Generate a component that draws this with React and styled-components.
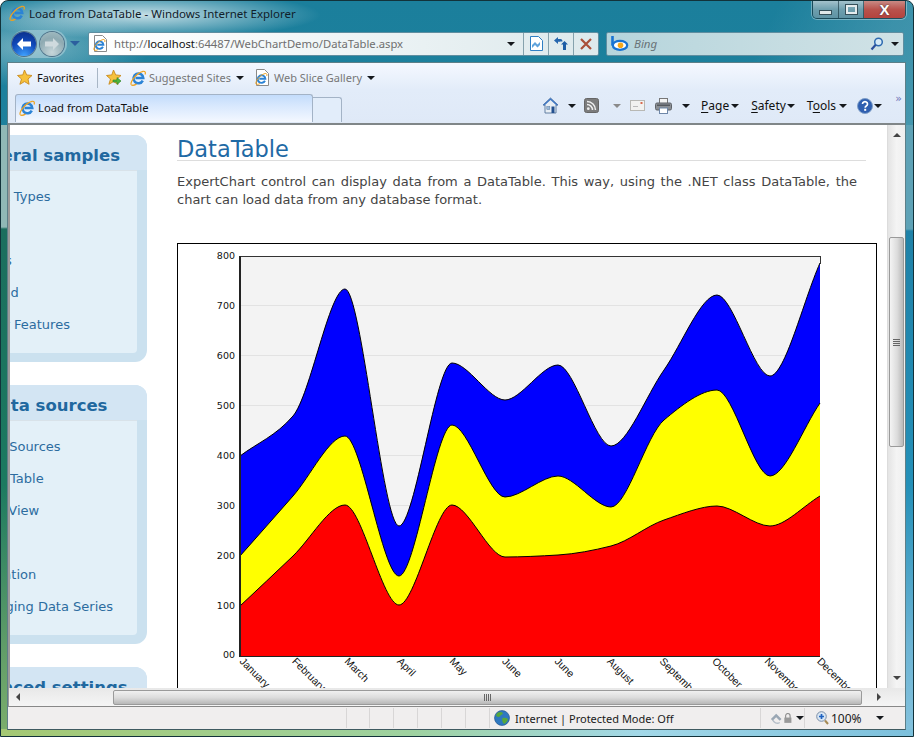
import styled, { createGlobalStyle } from "styled-components";

const GlobalStyle = createGlobalStyle`
  html, body { margin: 0; padding: 0; background: #fff; }
  body { width: 914px; height: 737px; overflow: hidden; font-family: "Noto Sans", "Liberation Sans", sans-serif; }
`;

const UI_FONT = `"Noto Sans", "Liberation Sans", sans-serif`;
const PAGE_FONT = `"DejaVu Sans", Verdana, sans-serif`;

/* ---------- icons ---------- */

function IeMark() {
  return (
    <>
      <path d="M12.800 10.600A4.900 4.900 0 1 1 13.300 8H5.500" fill="none" stroke="#2b83d6" strokeWidth="2.500" />
      <path d="M1.300 14.700C-.2 12.500 6 3 13 1.300c2-.4 2.800 1 2.100 3.200" fill="none" stroke="#eea21f" strokeWidth="1.200" />
      <path d="M1.300 14.700c1.100 1 3.200.5 5.200-.6" fill="none" stroke="#eea21f" strokeWidth="1.200" />
    </>
  );
}

function IeIcon() {
  return (
    <svg width="16" height="16" viewBox="0 0 16 16" style={{ flex: "none" }}>
      <IeMark />
    </svg>
  );
}

function PageIeIcon() {
  return (
    <svg width="16" height="17" viewBox="0 0 16 17" style={{ flex: "none" }}>
      <path d="M2.500.5h8l4 4v12h-12z" fill="#fff" stroke="#8a8a8a" />
      <g transform="translate(1 3.500) scale(.78)">
        <IeMark />
      </g>
    </svg>
  );
}

function Star({ add }) {
  return (
    <svg width="17" height="17" viewBox="0 0 17 17" style={{ flex: "none" }}>
      <path d="M8.500 1l2.200 4.900 5.300.6-4 3.500 1.100 5.300-4.600-2.700-4.600 2.700L5.500 10l-4-3.500 5.300-.6z" fill="#f6c13c" stroke="#c98a1c" strokeWidth=".9" />
      {add && <path d="M8 11h4V8.500l4 3.500-4 3.500V13H8z" fill="#4fb53c" stroke="#2c7f24" strokeWidth=".6" />}
    </svg>
  );
}

function NavArrow({ dir = 1, color = "#fff" }) {
  return (
    <svg width="16" height="14" viewBox="0 0 16 14" style={dir > 0 ? { transform: "scaleX(-1)" } : undefined}>
      <path d="M1 7l6-6v3.500h8v5H7V13z" fill={color} />
    </svg>
  );
}

function Globe() {
  return (
    <svg width="16" height="16" viewBox="0 0 16 16" style={{ flex: "none" }}>
      <circle cx="8" cy="8" r="7.500" fill="#2e78c0" stroke="#1d4f84" strokeWidth=".6" />
      <path d="M4 2.500c2-1 4-.5 5 .8-.5 2-3 1.500-3.500 3.500-1.500.5-3-.2-3.500-1.300.3-1.200 1-2.200 2-3zM8.500 8c2-.5 4 0 5.500 1-.5 2.500-2 4-4 5-1.500-1.500-2.500-4-1.500-6z" fill="#56a83c" />
    </svg>
  );
}

function HomeIcon() {
  return (
    <svg width="17" height="17" viewBox="0 0 17 17">
      <path d="M8.500 1L1 8h2v8h11V8h2z" fill="#e8eef4" stroke="#55749a" strokeWidth=".9" />
      <path d="M8.500 1L1 8l1.500.5 6-5.500 6 5.500L16 8z" fill="#3f77c4" />
      <rect x="9.500" y="9.500" width="3" height="6.500" fill="#23508f" />
      <rect x="4.800" y="9.500" width="3" height="3" fill="#9ab8d8" stroke="#5d7ea6" strokeWidth=".5" />
    </svg>
  );
}

function FeedIcon() {
  return (
    <svg width="15" height="15" viewBox="0 0 15 15">
      <rect x=".5" y=".5" width="14" height="14" rx="2" fill="#7c7c7c" stroke="#666" />
      <circle cx="4.300" cy="10.700" r="1.400" fill="#eee" />
      <path d="M3 6.500a5.500 5.500 0 0 1 5.500 5.500M3 3.500A8.500 8.500 0 0 1 11.500 12" fill="none" stroke="#eee" strokeWidth="1.500" />
    </svg>
  );
}

function MailIcon() {
  return (
    <svg width="15" height="11" viewBox="0 0 15 11">
      <rect x=".5" y=".5" width="14" height="10" fill="#f2f2f0" stroke="#b8b8b4" />
      <rect x="3" y="6" width="5" height="1" fill="#bbb" />
      <rect x="10.500" y="2" width="2" height="2" fill="#d86a50" />
    </svg>
  );
}

function PrinterIcon() {
  return (
    <svg width="17" height="16" viewBox="0 0 17 16">
      <rect x="4.500" y=".5" width="8" height="5" fill="#f4f4f4" stroke="#777" />
      <rect x=".5" y="5" width="16" height="7" rx="1.500" fill="#8b8f94" stroke="#5e6268" />
      <rect x="2" y="6.500" width="13" height="1.500" fill="#55595e" />
      <rect x="4.500" y="10" width="8" height="5.500" fill="#fff" stroke="#6f87a8" />
    </svg>
  );
}

function HelpIcon() {
  return (
    <svg width="16" height="16" viewBox="0 0 16 16">
      <circle cx="8" cy="8" r="7.500" fill="#2f5fb0" stroke="#7f9fc8" />
      <path d="M5.500 6a2.500 2.300 0 1 1 3.800 2c-.8.500-1.100.9-1.100 1.700" fill="none" stroke="#fff" strokeWidth="1.700" />
      <rect x="7.200" y="10.800" width="2" height="2" fill="#fff" />
    </svg>
  );
}

function BingLogo() {
  return (
    <svg width="18" height="15" viewBox="0 0 18 15" style={{ flex: "none" }}>
      <path d="M1.500 0v9.500" stroke="#1873d3" strokeWidth="2.600" fill="none" />
      <ellipse cx="9" cy="9.300" rx="7.200" ry="4.500" fill="#fff" stroke="#1873d3" strokeWidth="2.300" />
      <circle cx="9.500" cy="9.300" r="2.800" fill="#f5a81c" />
    </svg>
  );
}

function Magnifier() {
  return (
    <svg width="14" height="14" viewBox="0 0 14 14">
      <circle cx="8.500" cy="5" r="3.800" fill="#d6eaf6" stroke="#2d6ab0" strokeWidth="1.500" />
      <path d="M5.700 7.800L1.500 12.500" stroke="#2a4f9c" strokeWidth="2.200" />
    </svg>
  );
}

function CompatIcon() {
  return (
    <svg width="15" height="15" viewBox="0 0 15 15">
      <path d="M1 8l6-6 6 6-2 2-4-4-4 4z" fill="#9aa7b4" />
      <path d="M3 9c1 3 5 5 8 3" fill="none" stroke="#b4bec8" strokeWidth="1.500" />
    </svg>
  );
}

function RefreshIcon() {
  return (
    <svg width="16" height="15" viewBox="0 0 16 15">
      <path d="M1 4.500L5 1v2h2.500C8.800 3 9.500 4 9.500 5.500H8C8 5 7.600 5.800 7 5.800H5V8z" fill="#2566ad" />
      <path d="M15 8.500L11.500 5 8 8.500h2V14h3V8.500z" fill="#1f5ea6" />
    </svg>
  );
}

function StopIcon() {
  return (
    <svg width="12" height="12" viewBox="0 0 12 12">
      <path d="M1 1l10 10M11 1L1 11" stroke="#a9503a" strokeWidth="2.200" />
    </svg>
  );
}

function CompatPageIcon() {
  return (
    <svg width="13" height="15" viewBox="0 0 13 15">
      <path d="M.5.500h8l4 4v10H.5z" fill="#fff" stroke="#2f7fc4" />
      <path d="M2 9l3-3 2.500 2.500L10 6v3L7.500 11.500 5 9l-3 3z" fill="#5fa3dc" />
    </svg>
  );
}

function LockIcon() {
  return (
    <svg width="11" height="12" viewBox="0 0 11 12">
      <path d="M3 6V3.500a2.500 2.500 0 0 1 5 0V6" fill="none" stroke="#888" strokeWidth="1.200" />
      <rect x="1.500" y="5.500" width="8" height="6" fill="#999" />
    </svg>
  );
}

function ZoomIcon() {
  return (
    <svg width="13" height="14" viewBox="0 0 13 14">
      <circle cx="5.500" cy="5.500" r="4.800" fill="#d8e6f4" stroke="#7b8ea6" />
      <path d="M3 5.500h5M5.500 3v5" stroke="#1f62c0" strokeWidth="1.700" />
      <path d="M9 9.500l3 3.500" stroke="#a58a54" strokeWidth="2" />
    </svg>
  );
}

/* ---------- window frame ---------- */

const Window = styled.div`
  position: relative;
  width: 914px;
  height: 737px;
  box-sizing: border-box;
  display: flex;
  flex-direction: column;
  border: 1px solid #12323a;
  border-radius: 8px 8px 0 0;
  overflow: hidden;
  background:
    linear-gradient(90deg, #a4c873 0%, #9ed2a0 45%, #a2d8e8 70%, #7cc0dc 100%) left bottom / 100% 7px no-repeat,
    linear-gradient(180deg, #90b8b6 0, #90b8b6 102px, #1c6e5e 104px, #1c7a60 360px, #5f9c68 520px, #a4c873 100%) left 124px / 8px 100% no-repeat,
    linear-gradient(180deg, #5ea2b6 0, #5ea2b6 104px, #1f82a8 106px, #2490b8 360px, #6cb4d4 520px, #a6d6ea 100%) right 124px / 8px 100% no-repeat,
    radial-gradient(ellipse 180px 24px at 140px 14px, rgba(255, 255, 255, 0.75), rgba(255, 255, 255, 0) 100%),
    radial-gradient(ellipse 120px 40px at 30px 46px, rgba(220, 235, 235, 0.45), rgba(255, 255, 255, 0) 100%),
    linear-gradient(115deg, rgba(255, 255, 255, 0) 62%, rgba(255, 255, 255, 0.14) 72%, rgba(255, 255, 255, 0.32) 100%),
    linear-gradient(180deg, #1b7f9c 0%, #2b8aa3 100%);
`;

const TitleBar = styled.div`
  height: 27px;
  flex: none;
  display: flex;
  align-items: flex-start;
`;

const TitleIcon = styled.div`
  margin: 4px 0 0 8px;
  display: flex;
`;

const TitleText = styled.div`
  margin: 4px 0 0 4px;
  font-family: ${UI_FONT};
  font-size: 11.5px;
  line-height: 17px;
  color: #10202a;
`;

const WindowControls = styled.div`
  margin-left: auto;
  display: flex;
  width: 92px;
  height: 17px;
  border: 1px solid rgba(20, 50, 60, 0.7);
  border-top: none;
  border-radius: 0 0 5px 5px;
  box-shadow: 0 0 0 1px rgba(255, 255, 255, 0.35);
  overflow: hidden;
  margin-right: 7px;
`;

const ControlButton = styled.div`
  width: ${(p) => p.$w}px;
  flex: none;
  box-sizing: border-box;
  display: flex;
  align-items: center;
  justify-content: center;
  border-right: ${(p) => (p.$last ? "none" : "1px solid rgba(20, 50, 60, 0.6)")};
  background: ${(p) =>
    p.$close
      ? "linear-gradient(180deg, #c98a84 0, #b9524c 50%, #b5443e 100%)"
      : "linear-gradient(180deg, #a3c2cc 0, #6e9fae 50%, #5e93a4 100%)"};
`;

const MinGlyph = styled.div`
  width: 11px;
  height: 3px;
  margin-top: 5px;
  background: #dfe8ea;
  border: 1px solid #35505a;
`;

const MaxGlyph = styled.div`
  width: 7px;
  height: 5px;
  background: transparent;
  border: 2px solid #e4ecee;
  outline: 1px solid #35505a;
`;

const CloseGlyph = styled.div`
  font-family: "Liberation Sans", sans-serif;
  font-weight: 700;
  font-size: 15px;
  line-height: 15px;
  color: #fff;
  text-shadow: 0 0 2px #333;
`;

const NavBar = styled.div`
  height: 34px;
  flex: none;
  display: flex;
  align-items: center;
  padding-bottom: 3px;
  box-sizing: border-box;
`;

const NavPill = styled.div`
  margin-left: 10px;
  width: 56px;
  height: 28px;
  flex: none;
  display: flex;
  align-items: center;
  gap: 4px;
  padding: 0 1px;
  box-sizing: border-box;
  border-radius: 14px;
  background: rgba(200, 225, 230, 0.45);
`;

const NavButton = styled.div`
  width: 24px;
  height: 24px;
  flex: none;
  border-radius: 50%;
  display: flex;
  align-items: center;
  justify-content: center;
  box-shadow: 0 0 0 1px rgba(30, 50, 80, 0.55);
  background: ${(p) =>
    p.$off
      ? "radial-gradient(circle at 50% 85%, #c7d6da, #8eaab2 60%, #a7bfc5)"
      : "radial-gradient(circle at 50% 100%, #3fa2ff 0, #1048b8 55%, #0a2a80 100%)"};
`;

const HistoryArrow = styled.div`
  width: 0;
  height: 0;
  margin-left: 3px;
  border-left: 5px solid transparent;
  border-right: 5px solid transparent;
  border-top: 5px solid #2c5f9e;
`;

const AddressBox = styled.div`
  margin-left: 8px;
  width: 511px;
  height: 24px;
  flex: none;
  box-sizing: border-box;
  display: flex;
  align-items: center;
  border: 1px solid #5f8ea0;
  border-radius: 2px;
  background: linear-gradient(90deg, #fff 0, #f2f7f8 40%, #dde9ec 100%);
`;

const AddressIcon = styled.div`
  margin-left: 3px;
  display: flex;
`;

const UrlText = styled.div`
  margin-left: 6px;
  flex: 1;
  font-family: ${UI_FONT};
  font-size: 11.25px;
  white-space: nowrap;
  color: #6f6f6f;

  b {
    font-weight: 400;
    color: #111;
  }
`;

const AddressButton = styled.div`
  width: 25px;
  height: 22px;
  flex: none;
  box-sizing: border-box;
  display: flex;
  align-items: center;
  justify-content: center;
  border-left: ${(p) => (p.$plain ? "none" : "1px solid #86a2ad")};
`;

const SearchBox = styled.div`
  margin-left: 7px;
  width: 298px;
  height: 24px;
  flex: none;
  box-sizing: border-box;
  display: flex;
  align-items: center;
  padding: 0 4px;
  border: 1px solid #5f8ea0;
  border-radius: 2px;
  background: linear-gradient(90deg, #b6d5dc 0, #c6dde2 60%, #d0e2e6 100%);
`;

const SearchHint = styled.div`
  margin-left: 5px;
  flex: 1;
  font-family: ${UI_FONT};
  font-size: 11.5px;
  font-style: italic;
  color: #6a7478;
`;

const Caret = styled.div`
  width: 0;
  height: 0;
  flex: none;
  margin-left: ${(p) => p.$ml ?? 4}px;
  border-left: 4px solid transparent;
  border-right: 4px solid transparent;
  border-top: 4px solid ${(p) => p.$color ?? "#15181c"};
`;

/* ---------- browser body ---------- */

const Chrome = styled.div`
  flex: 1;
  min-height: 0;
  margin: 0 7px 6px 6px;
  display: flex;
  flex-direction: column;
  box-sizing: border-box;
  background: #fff;
  border: 1px solid #5d7f88;
  border-bottom: 1px solid #3f5a60;
`;

const CommandPanel = styled.div`
  height: 62px;
  flex: none;
  box-sizing: border-box;
  display: flex;
  flex-direction: column;
  background: linear-gradient(180deg, #f5f8ff 0, #e2ecf9 45%, #dfe9f7 100%);
  border-bottom: 2px solid #808688;
`;

const FavRow = styled.div`
  height: 31px;
  flex: none;
  display: flex;
  align-items: center;
  padding: 0 0 2px 8px;
  box-sizing: border-box;
  font-family: ${UI_FONT};
  font-size: 11px;
`;

const FavLabel = styled.span`
  margin-left: ${(p) => p.$ml ?? 4}px;
  color: ${(p) => (p.$muted ? "#777" : "#111")};
`;

const FavIcon = styled.div`
  margin-left: ${(p) => p.$ml}px;
  display: flex;
`;

const FavDivider = styled.div`
  width: 1px;
  height: 20px;
  margin: 0 7px 0 13px;
  background: #a8b6c6;
`;

const TabRow = styled.div`
  height: 29px;
  flex: none;
  display: flex;
  align-items: flex-start;
  padding-left: 7px;
  font-family: ${UI_FONT};
  font-size: 11.3px;
`;

const ActiveTab = styled.div`
  width: 298px;
  height: 28px;
  box-sizing: border-box;
  display: flex;
  align-items: center;
  gap: 3px;
  padding: 0 0 2px 3px;
  border: 1px solid #a3b3c6;
  border-bottom: none;
  border-radius: 3px 3px 0 0;
  background: linear-gradient(180deg, #c3dcfb 0, #d8e8fd 40%, #f4f8ff 100%);
  color: #111;
`;

const NewTab = styled.div`
  width: 29px;
  height: 25px;
  margin-top: 3px;
  box-sizing: border-box;
  border: 1px solid #a3b3c6;
  border-bottom: none;
  border-left: none;
  border-radius: 0 3px 0 0;
  background: #e2edfa;
`;

const Tools = styled.div`
  flex: 1;
  height: 29px;
  display: flex;
  align-items: center;
  padding: 0 0 6px 200px;
  box-sizing: border-box;
  font-size: 12px;
  color: #111;
`;

const ToolIcon = styled.div`
  margin-left: ${(p) => p.$ml ?? 0}px;
  display: flex;
`;

const ToolLabel = styled.span`
  margin-left: ${(p) => p.$ml}px;

  u {
    text-underline-offset: 2px;
  }
`;

const Chevrons = styled.div`
  position: absolute;
  top: 92px;
  right: 11px;
  font-family: "DejaVu Sans", sans-serif;
  font-size: 11px;
  line-height: 12px;
  color: #6f73b8;
`;

const Middle = styled.div`
  flex: 1;
  min-height: 0;
  display: flex;
  border-left: 2px solid #9a9a9a;
`;

const Viewport = styled.div`
  flex: 1;
  min-width: 0;
  display: flex;
  align-items: flex-start;
  padding-top: 10px;
  overflow: hidden;
  background: #fff;
`;

/* ---------- page: sidebar ---------- */

const Sidebar = styled.div`
  width: 228px;
  flex: none;
  margin-left: -91px;
  display: flex;
  flex-direction: column;
  gap: 23px;
  font-family: ${PAGE_FONT};
`;

const Panel = styled.div`
  flex: none;
  border-radius: 12px;
  background: #cbe1ef;
  padding: 0 10px 9px 0;
  position: relative;
`;

const PanelHeader = styled.div`
  height: 35px;
  margin-right: -10px;
  box-sizing: border-box;
  border-radius: 12px 12px 0 0;
  padding: 10px 0 0 ${(p) => p.$pl}px;
  background: #d3e5f3;
  font-size: 16.5px;
  font-weight: 700;
  line-height: 22px;
  white-space: nowrap;
  color: #21689f;
`;

const PanelBody = styled.div`
  border-top: 1px solid #d8e2e9;
  border-radius: 0 0 4px 0;
  padding: 10px 0 12px;
  background: #e3f0f8;
`;

const MenuItem = styled.div`
  height: 32px;
  padding-left: ${(p) => p.$pl}px;
  font-size: 13px;
  line-height: 32px;
  white-space: nowrap;
  color: #2c6c9f;
`;

/* ---------- page: content ---------- */

const Main = styled.div`
  width: 700px;
  flex: none;
  margin-left: 30px;
  font-family: ${PAGE_FONT};
`;

const Heading = styled.h1`
  width: 689px;
  height: 25px;
  margin: 0;
  box-sizing: content-box;
  border-bottom: 1px solid #dddddd;
  font-size: 22.5px;
  font-weight: 400;
  line-height: 28px;
  color: #1f6aa5;
`;

const Intro = styled.p`
  width: 680px;
  margin: 12px 0 34px 0;
  font-size: 13px;
  line-height: 18px;
  text-align: justify;
  color: #444;
`;

const ChartBox = styled.div`
  box-sizing: border-box;
  width: 700px;
  height: 480px;
  border: 1px solid #000;
  background: #fff;

  svg {
    display: block;
  }
`;

/* ---------- scrollbars, status ---------- */

const VScroll = styled.div`
  width: 17px;
  flex: none;
  display: flex;
  flex-direction: column;
  align-items: center;
  background: linear-gradient(90deg, #e4e4e4, #f4f4f4 50%, #efefef);
  border-left: 1px solid #dcdcdc;
`;

const ScrollArrow = styled.div`
  height: ${(p) => p.$h}px;
  flex: none;
  display: flex;
  align-items: center;
  justify-content: center;
`;

const ArrowUp = styled.div`
  width: 0;
  height: 0;
  border-left: 4px solid transparent;
  border-right: 4px solid transparent;
  border-${(p) => (p.$down ? "top" : "bottom")}: 4px solid #444;
`;

const VThumb = styled.div`
  width: 15px;
  height: 210px;
  margin-top: 92px;
  flex: none;
  box-sizing: border-box;
  display: flex;
  align-items: center;
  justify-content: center;
  border: 1px solid #9a9a9a;
  border-radius: 2px;
  background: linear-gradient(90deg, #f4f4f4, #dcdcdc 55%, #b9b9b9);
`;

const Grip = styled.div`
  display: flex;
  flex-direction: ${(p) => (p.$vertical ? "column" : "row")};
  gap: 1px;

  i {
    display: block;
    background: #666;
    width: ${(p) => (p.$vertical ? "7px" : "1px")};
    height: ${(p) => (p.$vertical ? "1px" : "7px")};
  }
`;

const VTrackFill = styled.div`
  flex: 1;
`;

const HScroll = styled.div`
  height: 18px;
  flex: none;
  display: flex;
  align-items: center;
  background: linear-gradient(180deg, #e8e8e8, #f5f5f5);
  border-left: 1px solid #9a9a9a;
  border-bottom: 1px solid #888;
`;

const ArrowSide = styled.div`
  width: 0;
  height: 0;
  border-top: 4px solid transparent;
  border-bottom: 4px solid transparent;
  border-${(p) => (p.$right ? "left" : "right")}: 4px solid #444;
`;

const HArrowCell = styled.div`
  width: ${(p) => p.$w}px;
  height: 100%;
  flex: none;
  display: flex;
  align-items: center;
  justify-content: center;
`;

const HThumb = styled.div`
  width: 749px;
  height: 15px;
  margin-left: 87px;
  flex: none;
  box-sizing: border-box;
  display: flex;
  align-items: center;
  justify-content: center;
  border: 1px solid #9a9a9a;
  border-radius: 2px;
  background: linear-gradient(180deg, #f0f0f0, #dcdcdc 50%, #b7b7b7);
`;

const StatusBar = styled.div`
  height: 22px;
  flex: none;
  display: flex;
  align-items: center;
  background: #f0eeee;
  font-family: ${UI_FONT};
  font-size: 11px;
  color: #1a1a1a;
`;

const StatusCell = styled.div`
  width: ${(p) => p.$w}px;
  height: 20px;
  flex: none;
  box-sizing: border-box;
  display: flex;
  align-items: center;
  padding-left: ${(p) => p.$pl ?? 0}px;
  gap: ${(p) => p.$gap ?? 0}px;
  border-right: ${(p) => (p.$noline ? "none" : "1px solid #d8d6d6")};
  white-space: nowrap;
`;

const ZoomValue = styled.span`
  font-size: 12px;
`;

/* ---------- chart ---------- */

const MONTHS = ["January", "February", "March", "April", "May", "June", "June", "August", "September", "October", "November", "December"];
const PLOT_X = [240, 293, 345, 399, 452, 505, 558, 611, 664, 717, 770, 820];
const RED = [606, 556, 505, 605, 505, 557, 555, 546, 520, 506, 526, 496];
const YELLOW = [556, 496, 436, 576, 425, 497, 476, 507, 420, 390, 476, 403];
const BLUE = [456, 416, 289, 526, 363, 400, 365, 446, 370, 295, 376, 263];
const TICKS = [800, 700, 600, 500, 400, 300, 200, 100];

// smooth line through the points, rounded on peaks and near straight elsewhere
function curve(ys) {
  const last = ys.length - 1;
  const slopeAt = (i) => (ys[i + 1] - ys[i]) / (PLOT_X[i + 1] - PLOT_X[i]);
  const slopes = ys.map((y, i) => {
    if (i === 0) return slopeAt(0);
    if (i === last) return slopeAt(last - 1);
    const a = slopeAt(i - 1);
    const b = slopeAt(i);
    return a * b <= 0 ? 0 : (2 * a * b) / (a + b);
  });
  const handle = (i, gap) => (slopes[i] === 0 ? gap * 0.3 : gap / 3);
  let d = `M${PLOT_X[0]} ${ys[0]}`;
  for (let i = 0; i < last; i++) {
    const gap = PLOT_X[i + 1] - PLOT_X[i];
    const h1 = handle(i, gap);
    const h2 = handle(i + 1, gap);
    d += `C${PLOT_X[i] + h1} ${ys[i] + slopes[i] * h1} ${PLOT_X[i + 1] - h2} ${ys[i + 1] - slopes[i + 1] * h2} ${PLOT_X[i + 1]} ${ys[i + 1]}`;
  }
  return d;
}

function Area({ ys, fill }) {
  const top = curve(ys);
  return (
    <>
      <path d={`${top}L820 656L240 656Z`} fill={fill} />
      <path d={top} fill="none" stroke="#000" strokeWidth="1" />
    </>
  );
}

function Chart() {
  return (
    <svg width="698" height="478" viewBox="178 244 698 478">
      <rect x="240" y="256" width="580" height="400" fill="#f3f3f3" />
      {[305, 355, 405, 455, 505, 555, 605].map((y) => (
        <line key={y} x1="240" x2="820" y1={y + 0.5} y2={y + 0.5} stroke="#e2e2e2" />
      ))}
      <Area ys={BLUE} fill="#0000ff" />
      <Area ys={YELLOW} fill="#ffff00" />
      <Area ys={RED} fill="#ff0000" />
      <line x1="240" x2="820" y1="256.500" y2="256.500" stroke="#333" />
      <line x1="820.500" x2="820.500" y1="256" y2="264" stroke="#333" />
      <line x1="240" x2="240" y1="256" y2="656" stroke="#222" strokeWidth="2" />
      <line x1="239" x2="820" y1="656.500" y2="656.500" stroke="#222" />
      <g fontFamily={PAGE_FONT} fontSize="9.500" fill="#111" textAnchor="end">
        {TICKS.map((t) => (
          <text key={t} x="235" y={656 - t / 2 + 2.5}>
            {t}
          </text>
        ))}
        <text x="235" y="658">
          00
        </text>
      </g>
      <g fontFamily={"'Liberation Sans', sans-serif"} fontSize="10.5" fill="#111">
        {MONTHS.map((m, i) => (
          <text key={i} transform={`translate(${239 + 52.5 * i} 662) rotate(45)`}>
            {m}
          </text>
        ))}
      </g>
    </svg>
  );
}

/* ---------- app ---------- */

const SAMPLE_PANELS = [
  {
    title: "General samples",
    pl: 46,
    items: [
      ["Chart Types", 55],
      ["Axes", 45],
      ["Labels", 51],
      ["Legend", 52],
      ["Other Features", 54],
    ],
  },
  {
    title: "Data sources",
    pl: 67,
    items: [
      ["Data Sources", 55],
      ["DataTable", 60],
      ["GridView", 62],
      ["XML", 60],
      ["Validation", 53],
      ["Managing Data Series", 51],
    ],
  },
  { title: "Advanced settings", pl: 36, items: [["Styles", 55]] },
];

export default function App() {
  return (
    <>
      <GlobalStyle />
      <Window>
        <TitleBar>
          <TitleIcon>
            <IeIcon />
          </TitleIcon>
          <TitleText>Load from DataTable - Windows Internet Explorer</TitleText>
          <WindowControls>
            <ControlButton $w={26}>
              <MinGlyph />
            </ControlButton>
            <ControlButton $w={25}>
              <MaxGlyph />
            </ControlButton>
            <ControlButton $w={41} $close $last>
              <CloseGlyph>X</CloseGlyph>
            </ControlButton>
          </WindowControls>
        </TitleBar>

        <NavBar>
          <NavPill>
            <NavButton>
              <NavArrow dir={-1} />
            </NavButton>
            <NavButton $off>
              <NavArrow color="#cfdade" />
            </NavButton>
          </NavPill>
          <HistoryArrow />
          <AddressBox>
            <AddressIcon>
              <PageIeIcon />
            </AddressIcon>
            <UrlText>
              http://<b>localhost</b>:64487/WebChartDemo/DataTable.aspx
            </UrlText>
            <AddressButton $plain>
              <Caret $ml={0} />
            </AddressButton>
            <AddressButton>
              <CompatPageIcon />
            </AddressButton>
            <AddressButton>
              <RefreshIcon />
            </AddressButton>
            <AddressButton>
              <StopIcon />
            </AddressButton>
          </AddressBox>
          <SearchBox>
            <BingLogo />
            <SearchHint>Bing</SearchHint>
            <Magnifier />
            <Caret $ml={7} />
          </SearchBox>
        </NavBar>

        <Chrome>
          <CommandPanel>
            <FavRow>
              <Star />
              <FavLabel>Favorites</FavLabel>
              <FavDivider />
              <Star add />
              <FavIcon $ml={8}>
                <IeIcon />
              </FavIcon>
              <FavLabel $muted $ml={3}>
                Suggested Sites
              </FavLabel>
              <Caret $ml={5} />
              <FavIcon $ml={10}>
                <PageIeIcon />
              </FavIcon>
              <FavLabel $muted>Web Slice Gallery</FavLabel>
              <Caret $ml={5} />
            </FavRow>
            <TabRow>
              <ActiveTab>
                <IeIcon />
                Load from DataTable
              </ActiveTab>
              <NewTab />
              <Tools>
                <ToolIcon>
                  <HomeIcon />
                </ToolIcon>
                <Caret $ml={9} />
                <ToolIcon $ml={8}>
                  <FeedIcon />
                </ToolIcon>
                <Caret $ml={14} $color="#8a8a8a" />
                <ToolIcon $ml={9}>
                  <MailIcon />
                </ToolIcon>
                <ToolIcon $ml={10}>
                  <PrinterIcon />
                </ToolIcon>
                <Caret $ml={10} />
                <ToolLabel $ml={11}>
                  <u>P</u>age
                </ToolLabel>
                <Caret $ml={2} />
                <ToolLabel $ml={12}>
                  <u>S</u>afety
                </ToolLabel>
                <Caret $ml={1} />
                <ToolLabel $ml={12}>
                  T<u>o</u>ols
                </ToolLabel>
                <Caret $ml={3} />
                <ToolIcon $ml={10}>
                  <HelpIcon />
                </ToolIcon>
                <Caret $ml={1} />
              </Tools>
            </TabRow>
          </CommandPanel>
          <Chevrons>»</Chevrons>

          <Middle>
            <Viewport>
              <Sidebar>
                {SAMPLE_PANELS.map((panel) => (
                  <Panel key={panel.title}>
                    <PanelHeader $pl={panel.pl}>{panel.title}</PanelHeader>
                    <PanelBody>
                      {panel.items.map(([label, pl]) => (
                        <MenuItem key={label} $pl={pl}>
                          {label}
                        </MenuItem>
                      ))}
                    </PanelBody>
                  </Panel>
                ))}
              </Sidebar>
              <Main>
                <Heading>DataTable</Heading>
                <Intro>
                  ExpertChart control can display data from a DataTable. This way, using the .NET class DataTable, the chart can load data from any database format.
                </Intro>
                <ChartBox>
                  <Chart />
                </ChartBox>
              </Main>
            </Viewport>
            <VScroll>
              <ScrollArrow $h={20}>
                <ArrowUp />
              </ScrollArrow>
              <VThumb>
                <Grip $vertical>
                  <i />
                  <i />
                  <i />
                  <i />
                </Grip>
              </VThumb>
              <VTrackFill />
              <ScrollArrow $h={20}>
                <ArrowUp $down />
              </ScrollArrow>
            </VScroll>
          </Middle>

          <HScroll>
            <HArrowCell $w={17}>
              <ArrowSide />
            </HArrowCell>
            <HThumb>
              <Grip>
                <i />
                <i />
                <i />
                <i />
              </Grip>
            </HThumb>
            <HArrowCell $w={33}>
              <ArrowSide $right />
            </HArrowCell>
          </HScroll>

          <StatusBar>
            <StatusCell $w={339} />
            <StatusCell $w={23} />
            <StatusCell $w={24} />
            <StatusCell $w={24} />
            <StatusCell $w={24} />
            <StatusCell $w={24} />
            <StatusCell $w={24} />
            <StatusCell $w={271} $pl={4} $gap={5}>
              <Globe />
              Internet | Protected Mode: Off
            </StatusCell>
            <StatusCell $w={44} $pl={9}>
              <CompatIcon />
              <LockIcon />
              <Caret $ml={3} />
            </StatusCell>
            <StatusCell $w={94} $pl={11} $gap={2} $noline>
              <ZoomIcon />
              <ZoomValue>100%</ZoomValue>
              <Caret $ml={12} />
            </StatusCell>
          </StatusBar>
        </Chrome>
      </Window>
    </>
  );
}
